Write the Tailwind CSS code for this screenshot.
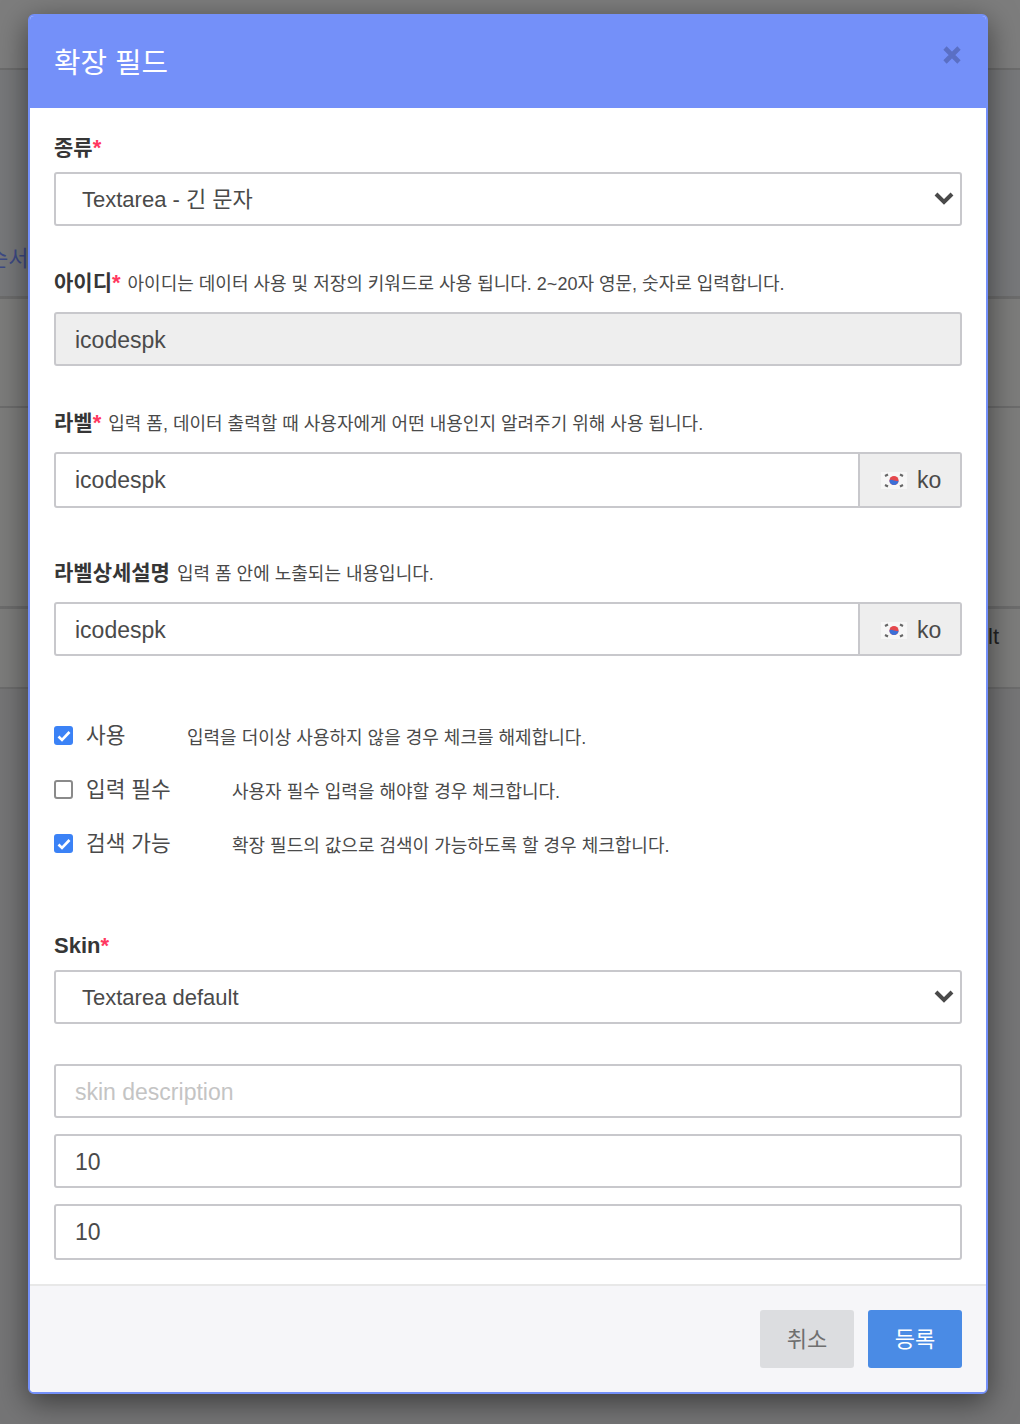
<!doctype html>
<html lang="ko">
<head>
<meta charset="UTF-8" />
<title>확장 필드</title>
<script src="https://cdn.jsdelivr.net/npm/@tailwindcss/browser@4"></script>
</head>
<body class="relative h-[1424px] w-[1020px] overflow-hidden bg-[#757576] font-['Liberation_Sans','Noto_Sans_CJK_KR',sans-serif] text-[#4a4a4a]">
    <!-- page behind the overlay -->
    <div class="h-[70px] border-b-2 border-[#6c6c6c] bg-[#7d7d7d]"></div>
    <div class="h-[229px] border-b-[3px] border-[#6c6c6c] bg-[#77787a] pt-[175px] text-[22px] leading-[28px] text-[#3d4a85]"><span class="ml-[-12px]">순서</span></div>
    <div class="h-[109px] border-b-2 border-[#6c6c6c] bg-[#7c7c7b]"></div>
    <div class="h-[201px] border-b-[3px] border-[#6c6c6c] bg-[#7c7c7b]"></div>
    <div class="flex h-[80px] justify-end border-b-2 border-[#6c6c6c] bg-[#7c7c7b] pt-[14px] pr-[21px] text-[22px] leading-[28px] text-[#222]">lt</div>

    <!-- modal -->
    <div class="absolute top-[14px] left-[28px] flex h-[1380px] w-[960px] flex-col overflow-hidden rounded-[6px] border-2 border-[#7490f9] bg-white shadow-[0_8px_30px_rgba(0,0,0,0.5)]">
        <header class="-mx-[2px] -mt-[2px] flex h-[94px] shrink-0 items-center justify-between bg-[#7490f9] pr-[26px] pl-[26px]">
            <h1 class="mt-[3px] text-[28.8px] leading-[36px] text-white">확장 필드</h1>
            <svg width="20" height="20" viewBox="0 0 20 20" class="mt-[-12px]"><path d="M3 3L17 17M17 3L3 17" stroke="#5a6fc4" stroke-width="4.6" /></svg>
        </header>

        <div class="flex-1 px-[24px] pt-[27px]">
            <label class="block text-[21px] leading-[26px] font-bold text-[#363636]">종류<span class="text-[22px] text-[#ff3860]">*</span></label>
            <div class="relative mt-[11px] flex h-[54px] items-center rounded-[3px] border-2 border-[#c8c8cc] pl-[26px] text-[22px]">
                Textarea - 긴 문자
                <svg width="20" height="14" viewBox="0 0 20 14" class="absolute top-[17px] right-[6px]"><path d="M2 3L10 11L18 3" fill="none" stroke="#4a4a4a" stroke-width="4" /></svg>
            </div>

            <p class="mt-[43px] flex items-baseline text-[18px] leading-[28px]"><b class="text-[21px] text-[#363636]">아이디</b><b class="mr-[7px] text-[22px] text-[#ff3860]">*</b>아이디는 데이터 사용 및 저장의 키워드로 사용 됩니다. 2~20자 영문, 숫자로 입력합니다.</p>
            <div class="mt-[14px] flex h-[54px] items-center rounded-[3px] border-2 border-[#c8c8cc] bg-[#eeeeee] pt-[2px] pl-[19px] text-[23px]">icodespk</div>

            <p class="mt-[43px] flex items-baseline text-[18px] leading-[28px]"><b class="text-[21px] text-[#363636]">라벨</b><b class="mr-[7px] text-[22px] text-[#ff3860]">*</b>입력 폼, 데이터 출력할 때 사용자에게 어떤 내용인지 알려주기 위해 사용 됩니다.</p>
            <div class="mt-[14px] flex h-[56px] rounded-[3px] border-2 border-[#c8c8cc]">
                <div class="flex flex-1 items-center pl-[19px] text-[23px]">icodespk</div>
                <div class="flex w-[102px] items-center gap-[10px] border-l-2 border-[#c8c8cc] bg-[#eeeeee] pl-[21px] text-[23px]">
                    <svg width="26" height="17" viewBox="0 0 26 17"><rect width="26" height="17" fill="#f7f7f7" /><circle cx="13" cy="8.5" r="4.6" fill="#e5484d" /><path d="M8.4 8.5a4.6 4.6 0 0 0 9.2 0c-1.5 1.5-3 0-4.6 0s-3 -1.5-4.6 0z" fill="#3b6fd8" /><path d="M4 4l3 -1.5M4 13l3 1.5M22 4l-3 -1.5M22 13l-3 1.5" stroke="#666" stroke-width="2.2" /></svg>
                    ko
                </div>
            </div>

            <p class="mt-[51px] flex items-baseline text-[18px] leading-[28px]"><b class="mr-[7px] text-[21px] text-[#363636]">라벨상세설명</b>입력 폼 안에 노출되는 내용입니다.</p>
            <div class="mt-[14px] flex h-[54px] rounded-[3px] border-2 border-[#c8c8cc]">
                <div class="flex flex-1 items-center pt-[2px] pl-[19px] text-[23px]">icodespk</div>
                <div class="flex w-[102px] items-center gap-[10px] border-l-2 border-[#c8c8cc] bg-[#eeeeee] pt-[2px] pl-[21px] text-[23px]">
                    <svg width="26" height="17" viewBox="0 0 26 17"><rect width="26" height="17" fill="#f7f7f7" /><circle cx="13" cy="8.5" r="4.6" fill="#e5484d" /><path d="M8.4 8.5a4.6 4.6 0 0 0 9.2 0c-1.5 1.5-3 0-4.6 0s-3 -1.5-4.6 0z" fill="#3b6fd8" /><path d="M4 4l3 -1.5M4 13l3 1.5M22 4l-3 -1.5M22 13l-3 1.5" stroke="#666" stroke-width="2.2" /></svg>
                    ko
                </div>
            </div>

            <div class="mt-[60px] flex h-[40px] items-center">
                <span class="mb-[1px] flex h-[19px] w-[19px] items-center justify-center rounded-[3px] bg-[#3b82f6]"><svg width="14" height="12" viewBox="0 0 14 12"><path d="M1.5 6.5L5 10L12.5 2" fill="none" stroke="#fff" stroke-width="2.6" /></svg></span>
                <span class="ml-[13px] w-[101px] text-[21.4px]">사용</span>
                <span class="mt-[5px] text-[18px]">입력을 더이상 사용하지 않을 경우 체크를 해제합니다.</span>
            </div>
            <div class="mt-[14px] flex h-[40px] items-center">
                <span class="mb-[1px] h-[19px] w-[19px] rounded-[3px] border-2 border-[#8a8a8a]"></span>
                <span class="ml-[13px] w-[146px] text-[21.4px]">입력 필수</span>
                <span class="mt-[5px] text-[18px]">사용자 필수 입력을 해야할 경우 체크합니다.</span>
            </div>
            <div class="mt-[14px] flex h-[40px] items-center">
                <span class="mb-[1px] flex h-[19px] w-[19px] items-center justify-center rounded-[3px] bg-[#3b82f6]"><svg width="14" height="12" viewBox="0 0 14 12"><path d="M1.5 6.5L5 10L12.5 2" fill="none" stroke="#fff" stroke-width="2.6" /></svg></span>
                <span class="ml-[13px] w-[146px] text-[21.4px]">검색 가능</span>
                <span class="mt-[5px] text-[18px]">확장 필드의 값으로 검색이 가능하도록 할 경우 체크합니다.</span>
            </div>

            <label class="mt-[69px] block text-[22px] leading-[26px] font-bold text-[#363636]">Skin<span class="text-[#ff3860]">*</span></label>
            <div class="relative mt-[11px] flex h-[54px] items-center rounded-[3px] border-2 border-[#c8c8cc] pl-[26px] text-[22px]">
                Textarea default
                <svg width="20" height="14" viewBox="0 0 20 14" class="absolute top-[17px] right-[6px]"><path d="M2 3L10 11L18 3" fill="none" stroke="#4a4a4a" stroke-width="4" /></svg>
            </div>
            <div class="mt-[40px] flex h-[54px] items-center rounded-[3px] border-2 border-[#c8c8cc] pt-[2px] pl-[19px] text-[23px] text-[#c4c4c4]">skin description</div>
            <div class="mt-[16px] flex h-[54px] items-center rounded-[3px] border-2 border-[#c8c8cc] pt-[2px] pl-[19px] text-[23px]">10</div>
            <div class="mt-[16px] flex h-[56px] items-center rounded-[3px] border-2 border-[#c8c8cc] pl-[19px] text-[23px]">10</div>
        </div>

        <footer class="flex h-[108px] shrink-0 justify-end gap-[14px] border-t-2 border-[#e8e8e8] bg-[#f6f6f9] pt-[24px] pr-[24px]">
            <button class="h-[58px] w-[94px] rounded-[3px] bg-[#dcdde0] text-[22px] text-[#6f6f6f]">취소</button>
            <button class="h-[58px] w-[94px] rounded-[3px] bg-[#4a8be5] text-[22px] text-white">등록</button>
        </footer>
    </div>
</body>
</html>
